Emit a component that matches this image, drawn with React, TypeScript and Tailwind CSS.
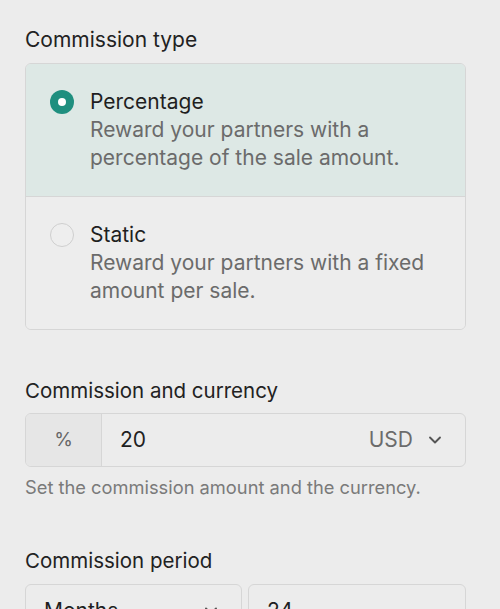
import { ChevronDown } from 'lucide-react'

function RadioOption({
  title,
  desc,
  selected,
}: {
  title: string
  desc: string[]
  selected?: boolean
}) {
  return (
    <div className={`flex gap-4 px-6 pt-6 pb-6 ${selected ? 'bg-[#dde8e5]' : 'bg-[#ededed]'}`}>
      <div className="pt-[2px]">
        {selected ? (
          <div className="w-6 h-6 rounded-full bg-[#1f8f7f] flex items-center justify-center">
            <div className="w-2 h-2 rounded-full bg-white" />
          </div>
        ) : (
          <div className="w-6 h-6 rounded-full border border-[#cfcfcf] bg-[#eeeeee]" />
        )}
      </div>
      <div className="flex flex-col">
        <span className="text-[21px] leading-7 text-[#1f1f1f]">{title}</span>
        {desc.map((d) => (
          <span key={d} className="text-[21px] leading-7 text-[#6b6b6b]">
            {d}
          </span>
        ))}
      </div>
    </div>
  )
}

export default function App() {
  return (
    <div className="h-[609px] overflow-hidden bg-[#ececec] px-[25px] pt-[26px] font-['Inter',sans-serif]">
      <h3 className="text-[21px] leading-7 text-[#222] mb-[9px]">Commission type</h3>
      <div className="w-[441px] rounded-md border border-[#d6d6d6] overflow-hidden">
        <RadioOption
          selected
          title="Percentage"
          desc={['Reward your partners with a', 'percentage of the sale amount.']}
        />
        <div className="border-t border-[#d6d6d6]" />
        <RadioOption title="Static" desc={['Reward your partners with a fixed', 'amount per sale.']} />
      </div>

      <h3 className="text-[20.5px] leading-7 text-[#222] mt-[47px] mb-[8px]">Commission and currency</h3>
      <div className="w-[441px] h-[54px] flex rounded-md border border-[#d6d6d6] overflow-hidden">
        <div className="w-[76px] bg-[#e6e6e6] border-r border-[#d6d6d6] flex items-center justify-center text-[19px] text-[#666]">
          %
        </div>
        <div className="flex-1 flex items-center pl-[18px] pr-5 text-[21px] text-[#1f1f1f]">
          <span className="flex-1">20</span>
          <span className="text-[#6b6b6b]">USD</span>
          <ChevronDown className="w-5 h-5 ml-3 text-[#555]" strokeWidth={2.25} />
        </div>
      </div>
      <p className="mt-2 text-[18.3px] leading-6 text-[#7a7a7a]">Set the commission amount and the currency.</p>

      <h3 className="text-[20.5px] leading-7 text-[#222] mt-[48px] mb-[9px]">Commission period</h3>
      <div className="w-[441px] grid grid-cols-[217px_218px] gap-[6px]">
        <div className="h-[54px] rounded-md border border-[#d6d6d6] flex items-center pl-[18px] pr-5 text-[21px] text-[#1f1f1f]">
          <span className="flex-1">Months</span>
          <ChevronDown className="w-5 h-5 text-[#555]" strokeWidth={2.25} />
        </div>
        <div className="h-[54px] rounded-md border border-[#d6d6d6] flex items-center pl-[18px] text-[21px] text-[#1f1f1f]">
          24
        </div>
      </div>
    </div>
  )
}
